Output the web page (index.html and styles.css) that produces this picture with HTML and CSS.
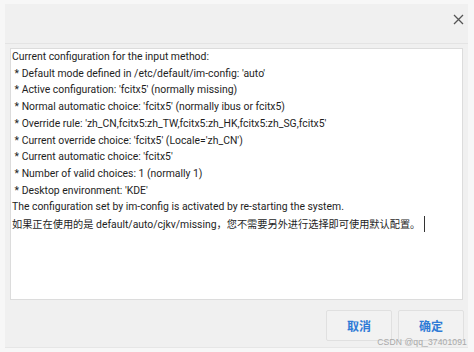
FILE: index.html
```html
<!DOCTYPE html>
<html>
<head>
<meta charset="utf-8">
<link rel="stylesheet" href="styles.css">
</head>
<body>
<div class="dialog">
  <div class="titlebar">
    <span class="close">
      <svg width="11" height="11" viewBox="0 0 11 11"><path d="M1 1L10 10M10 1L1 10" stroke="#555" stroke-width="1.3" fill="none"/></svg>
    </span>
  </div>
  <div class="textbox">
    <div class="line">Current configuration for the input method:</div>
    <div class="line"> * Default mode defined in /etc/default/im-config: 'auto'</div>
    <div class="line"> * Active configuration: 'fcitx5' (normally missing)</div>
    <div class="line"> * Normal automatic choice: 'fcitx5' (normally ibus or fcitx5)</div>
    <div class="line"> * Override rule: 'zh_CN,fcitx5:zh_TW,fcitx5:zh_HK,fcitx5:zh_SG,fcitx5'</div>
    <div class="line"> * Current override choice: 'fcitx5' (Locale='zh_CN')</div>
    <div class="line"> * Current automatic choice: 'fcitx5'</div>
    <div class="line"> * Number of valid choices: 1 (normally 1)</div>
    <div class="line"> * Desktop environment: 'KDE'</div>
    <div class="line">The configuration set by im-config is activated by re-starting the system.</div>
    <div class="line"><span class="cjk">如果正在使用的是</span> default/auto/cjkv/missing<span class="cjk">，您不需要另外进行选择即可使用默认配置。</span><span class="caret"></span></div>
  </div>
  <div class="footer">
    <button class="btn">取消</button>
    <button class="btn">确定</button>
  </div>
  <div class="watermark">CSDN @qq_37401091</div>
</div>
</body>
</html>
```
FILE: styles.css
```css
html, body {
  margin: 0;
  padding: 0;
  background: #f7f7f7;
  width: 474px;
  height: 352px;
  overflow: hidden;
}
.dialog {
  position: relative;
  margin: 4px 6px 0 5px;
  height: 344px;
  background: #f0f0f0;
  display: flex;
  flex-direction: column;
  border-bottom: 1px solid #e6e6e6;
  box-sizing: border-box;
}
.titlebar {
  height: 40px;
  display: flex;
  justify-content: flex-end;
  align-items: center;
  padding-right: 4px;
  border-bottom: 1px solid #e4e4e4;
  box-sizing: border-box;
}
.close {
  display: flex;
  width: 11px;
  height: 11px;
  margin-top: -9px;
}
.textbox {
  margin: 4px 5px 0 5px;
  height: 252px;
  background: #fff;
  border: 1px solid #dcdcdc;
  box-sizing: border-box;
  padding: 0 0 0 1px;
  font-family: Roboto, "Noto Sans CJK SC", sans-serif;
  font-size: 10.4px;
  color: #1e1e1e;
  line-height: 16.7px;
}
.line {
  white-space: pre;
}
.cjk {
  font-family: "Noto Sans CJK SC", sans-serif;
  font-size: 10.2px;
}
.caret {
  display: inline-block;
  width: 1px;
  height: 16px;
  background: #333;
  vertical-align: -4px;
  margin-left: 4px;
}
.footer {
  display: flex;
  justify-content: flex-end;
  gap: 6px;
  padding: 10px 4px 0 0;
}
.btn {
  width: 66px;
  height: 31px;
  background: #f2f2f2;
  border: 1px solid #e0e0e0;
  border-radius: 2px;
  color: #2f7bd6;
  font-family: "Noto Sans CJK SC", sans-serif;
  font-weight: bold;
  font-size: 12px;
  padding: 0;
}
.watermark {
  position: absolute;
  right: 1px;
  bottom: 0px;
  font-family: "Liberation Sans", sans-serif;
  font-size: 8.6px;
  color: #a8a8a8;
  letter-spacing: 0.1px;
}
```
